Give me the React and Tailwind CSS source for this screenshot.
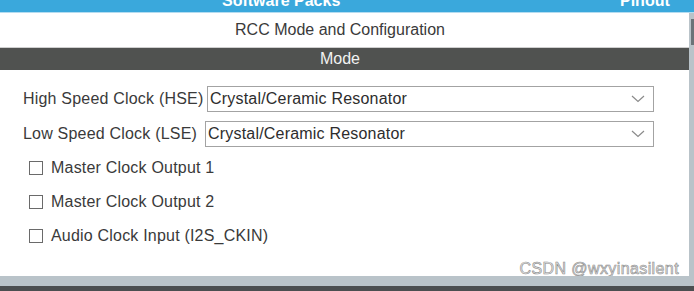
import React from "react";

function Chevron() {
  return (
    <svg width="14" height="8" viewBox="0 0 14 8" className="shrink-0">
      <path d="M1 1l6 5.5L13 1" fill="none" stroke="#8a8a8a" strokeWidth="1.2" />
    </svg>
  );
}

function SelectRow({ label, labelWidth, value }) {
  return (
    <div className="flex items-center h-[26px]">
      <span className={`${labelWidth} shrink-0 whitespace-nowrap text-[16px] tracking-[0.2px] text-[#3a3a3a]`}>{label}</span>
      <div className="flex-1 h-[26px] flex items-center justify-between border border-[#a3a3a3] bg-white pl-[2px] pr-[8px]">
        <span className="text-[16px] tracking-[0.2px] text-[#2d2d2d]">{value}</span>
        <Chevron />
      </div>
    </div>
  );
}

function CheckRow({ label }) {
  return (
    <div className="flex items-center h-[34px] pl-[29px]">
      <span className="w-[14px] h-[14px] border border-[#6a6a6a] bg-white shrink-0" />
      <span className="ml-[8px] text-[16px] tracking-[0.2px] text-[#3a3a3a] whitespace-nowrap">{label}</span>
    </div>
  );
}

export default function App() {
  return (
    <div
      className="w-[694px] h-[291px] overflow-hidden bg-white flex flex-col"
      style={{ fontFamily: '"Liberation Sans", Arial, sans-serif' }}
    >
      {/* top tab bar, mostly scrolled out of view */}
      <div className="h-[12px] shrink-0 bg-[#3aa8dc] relative overflow-hidden text-white font-bold text-[16px]">
        <span className="absolute left-[222px] top-[-8px] leading-[18px]">Software Packs</span>
        <span className="absolute left-[620px] top-[-8px] leading-[18px]">Pinout</span>
      </div>
      <div className="h-px shrink-0 bg-[#b4dcf0]" />

      <div className="flex flex-1 min-h-0">
        <div className="flex-1 flex flex-col">
          <div className="h-[34px] flex items-center justify-center pr-[9px] text-[16px] text-[#3a3a3a]">
            RCC Mode and Configuration
          </div>
          <div className="h-px bg-[#cfcfcf]" />
          <div className="h-[22px] bg-[#505250] flex items-center justify-center pr-[9px] text-[16px] text-[#f2f2f2]">
            Mode
          </div>

          <div className="flex flex-col gap-[9px] pl-[23px] pr-[35px] pt-[16px]">
            <SelectRow label="High Speed Clock (HSE)" labelWidth="w-[184px]" value="Crystal/Ceramic Resonator" />
            <SelectRow label="Low Speed Clock (LSE)" labelWidth="w-[182px]" value="Crystal/Ceramic Resonator" />
          </div>

          <div className="flex flex-col pt-[4px]">
            <CheckRow label="Master Clock Output 1" />
            <CheckRow label="Master Clock Output 2" />
            <CheckRow label="Audio Clock Input (I2S_CKIN)" />
          </div>

          <div className="flex-1 flex items-end justify-end pr-[10px]">
            <span
              className="text-[16px] text-[#e8e8e8] leading-[14px] tracking-[0.4px]"
              style={{ WebkitTextStroke: "0.6px #8c8c8c" }}
            >
              CSDN @wxyinasilent
            </span>
          </div>
        </div>
        <div className="w-[5px] shrink-0 bg-[#b9c3c9] relative">
          <div className="absolute right-0 top-[6px] w-[3px] h-[26px] bg-[#6b7378]" />
        </div>
      </div>

      <div className="h-[10px] shrink-0 bg-[#b9c3c9]" />
      <div className="h-[5px] shrink-0 bg-[#4b4e50]" />
    </div>
  );
}
